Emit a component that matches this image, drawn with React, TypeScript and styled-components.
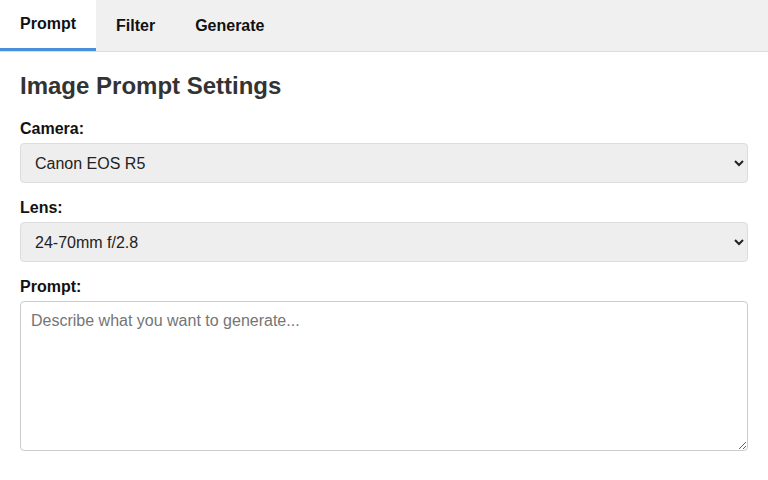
import React, { useState } from 'react';
import styled, { createGlobalStyle } from 'styled-components';

const GlobalStyle = createGlobalStyle`
  body {
    margin: 0;
    background: #ffffff;
    font-family: "Liberation Sans", Arial, sans-serif;
  }
`;

const tabs = ['Prompt', 'Filter', 'Generate'];

export default function App() {
  const [active, setActive] = useState('Prompt');
  const [camera, setCamera] = useState('Canon EOS R5');
  const [lens, setLens] = useState('24-70mm f/2.8');

  return (
    <>
      <GlobalStyle />
      <TabBar>
        {tabs.map((t) => (
          <Tab key={t} $active={t === active} onClick={() => setActive(t)}>
            {t}
          </Tab>
        ))}
      </TabBar>
      <Panel>
        <Heading>Image Prompt Settings</Heading>
        <Group>
          <Label>Camera:</Label>
          <Select value={camera} onChange={(e) => setCamera(e.target.value)}>
            <option>Canon EOS R5</option>
            <option>Nikon Z7 II</option>
            <option>Sony A7R IV</option>
          </Select>
        </Group>
        <Group>
          <Label>Lens:</Label>
          <Select value={lens} onChange={(e) => setLens(e.target.value)}>
            <option>24-70mm f/2.8</option>
            <option>50mm f/1.8</option>
            <option>85mm f/1.4</option>
          </Select>
        </Group>
        <Group>
          <Label>Prompt:</Label>
          <TextArea placeholder="Describe what you want to generate..." />
        </Group>
      </Panel>
    </>
  );
}

const TabBar = styled.div`
  display: flex;
  background-color: #f0f0f0;
  border-bottom: 1px solid #dddddd;
`;

const Tab = styled.button<{ $active: boolean }>`
  border: none;
  border-bottom: 3px solid ${(p) => (p.$active ? '#4a90d9' : 'transparent')};
  background-color: ${(p) => (p.$active ? '#ffffff' : 'transparent')};
  padding: ${(p) => (p.$active ? '14px 20px 15px' : '17px 20px 13px')};
  font-family: "Liberation Sans", Arial, sans-serif;
  font-size: 16px;
  font-weight: bold;
  color: #111111;
  cursor: pointer;
  line-height: 18px;
`;

const Panel = styled.div`
  padding: 20px;
`;

const Heading = styled.h2`
  margin: 0 0 20px;
  font-size: 24px;
  font-weight: bold;
  color: #333333;
`;

const Group = styled.div`
  margin-bottom: 16px;
`;

const Label = styled.label`
  display: block;
  margin-bottom: 5px;
  font-size: 16px;
  font-weight: bold;
  color: #111111;
`;

const Select = styled.select`
  display: block;
  width: 100%;
  height: 40px;
  padding: 0 10px;
  font-family: "Liberation Sans", Arial, sans-serif;
  font-size: 16px;
  color: #222222;
  background-color: #eeeeee;
  border: 1px solid #dddddd;
  border-radius: 4px;
`;

const TextArea = styled.textarea`
  display: block;
  width: 100%;
  height: 150px;
  box-sizing: border-box;
  padding: 10px;
  font-family: "Liberation Sans", Arial, sans-serif;
  font-size: 16px;
  border: 1px solid #cccccc;
  border-radius: 4px;
`;
